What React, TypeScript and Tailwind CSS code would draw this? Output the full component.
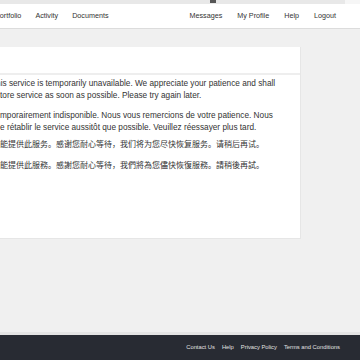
const NAV_LEFT = ["Portfolio", "Activity", "Documents"];
const NAV_RIGHT = ["Messages", "My Profile", "Help", "Logout"];
const FOOTER = ["Contact Us", "Help", "Privacy Policy", "Terms and Conditions"];

export default function App() {
  return (
    <div className="w-[360px] h-[360px] overflow-hidden bg-[#f0f0f0] flex flex-col font-['Liberation_Sans','Noto_Sans_CJK_SC',sans-serif] text-[#333]">
      {/* top strip */}
      <div className="h-[4px] flex shrink-0">
        <div className="w-[345px] bg-[#e8e8e8] relative">
          <div className="absolute left-[210px] top-0 w-[6px] h-[3px] bg-[#555]" />
        </div>
        <div className="flex-1 bg-[#f6f6f6]" />
      </div>

      {/* nav */}
      <nav className="h-[25px] shrink-0 bg-white border-b border-[#dcdcdc] flex items-center justify-between text-[7.2px] whitespace-nowrap">
        <div className="flex gap-[14px] -ml-[5px]">
          {NAV_LEFT.map((n) => (
            <span key={n}>{n}</span>
          ))}
        </div>
        <div className="flex gap-[15px] pr-[24px]">
          {NAV_RIGHT.map((n) => (
            <span key={n}>{n}</span>
          ))}
        </div>
      </nav>

      {/* main */}
      <main className="flex-1 pt-[18px]">
        <div className="w-[301px] bg-white border-r border-b border-[#e6e6e6]">
          <div className="h-[28px] border-b-2 border-[#eeeeee]" />
          <div className="h-[163px] pt-[3px] text-[8.25px] leading-[12px] whitespace-nowrap overflow-hidden">
            <p className="-ml-[9px]">This service is temporarily unavailable. We appreciate your patience and shall</p>
            <p>tore service as soon as possible. Please try again later.</p>
            <p className="mt-[8px]">mporairement indisponible. Nous vous remercions de votre patience. Nous</p>
            <p>e rétablir le service aussitôt que possible. Veuillez réessayer plus tard.</p>
            <p className="mt-[3px] text-[8px] leading-[16px]">
              能提供此服务。感谢您耐心等待，我们将为您尽快恢复服务。请稍后再试。
            </p>
            <p className="mt-[5px] text-[8px] leading-[16px]">
              能提供此服務。感謝您耐心等待，我們將為您儘快恢復服務。請稍後再試。
            </p>
          </div>
        </div>
      </main>

      {/* footer */}
      <footer className="h-[28px] shrink-0 border-t-[3px] border-[#e4e4e4] bg-[#282b33] flex items-center justify-end pr-[20px] gap-[7px] text-[5.8px] text-[#e2e2e2] whitespace-nowrap">
        {FOOTER.map((f) => (
          <span key={f}>{f}</span>
        ))}
      </footer>
    </div>
  );
}
